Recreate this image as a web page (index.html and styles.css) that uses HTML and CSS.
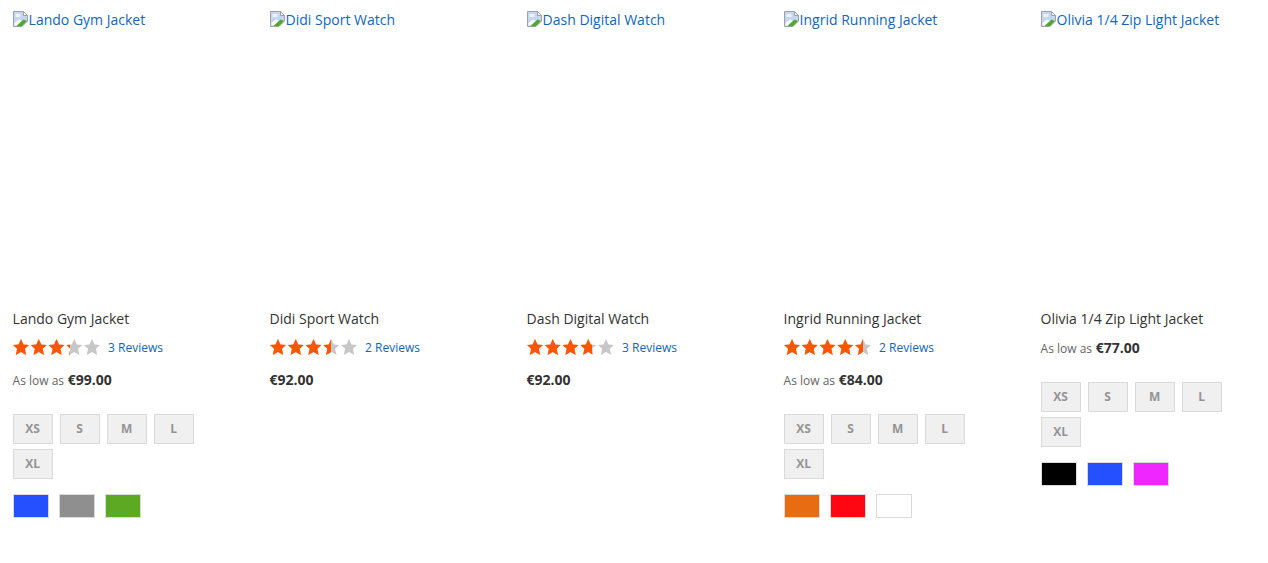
FILE: index.html
```html
<!DOCTYPE html>
<html>
<head>
    <link rel="stylesheet" href="styles.css">
</head>
<body>
    <svg class="sprite" width="0" height="0">
        <symbol id="broken" viewBox="0 0 16 16">
            <path d="M.5.5H10.500L14.500 4.500V10L9 15.500H.5Z" fill="#c3d6f2" stroke="#a0a0a0"/>
            <path d="M10.500 .5V4.500H14.500Z" fill="#fff" stroke="#a0a0a0"/>
            <path d="M2.500 3h5v3h-5z" fill="#eef3fb"/>
            <path d="M1.500 14.500V12L6 8.500L9 10L4 14.500Z" fill="#fff"/>
            <path d="M3.500 15L10.500 8.500L14 10L9 15Z" fill="#4fa832"/>
        </symbol>
        <symbol id="star" viewBox="0 0 16 16">
            <path d="M8 0L10.500 5.500L16 6L11.900 9.800L13.200 16L8 13L2.800 16L4.100 9.800L0 6L5.500 5.500Z"/>
        </symbol>
        <symbol id="five-stars" viewBox="0 0 90 16">
            <use href="#star" x="0" width="16" height="16"/>
            <use href="#star" x="17.750" width="16" height="16"/>
            <use href="#star" x="35.500" width="16" height="16"/>
            <use href="#star" x="53.250" width="16" height="16"/>
            <use href="#star" x="71" width="16" height="16"/>
        </symbol>
    </svg>

    <div class="products">
        <div class="card">
            <a class="photo" href="#"><svg class="broken"><use href="#broken"/></svg>Lando Gym Jacket</a>
            <div class="name">Lando Gym Jacket</div>
            <div class="rating">
                <div class="stars">
                    <svg class="stars-row"><use href="#five-stars"/></svg>
                    <span class="stars-on" style="width: 64%"><svg class="stars-row"><use href="#five-stars"/></svg></span>
                </div>
                <a href="#">3 Reviews</a>
            </div>
            <div class="price"><span class="label">As low as</span> €99.00</div>
            <div class="sizes">
                <div class="size">XS</div>
                <div class="size">S</div>
                <div class="size">M</div>
                <div class="size">L</div>
                <div class="size">XL</div>
            </div>
            <div class="colors">
                <div class="color blue"></div>
                <div class="color gray"></div>
                <div class="color green"></div>
            </div>
        </div>

        <div class="card">
            <a class="photo" href="#"><svg class="broken"><use href="#broken"/></svg>Didi Sport Watch</a>
            <div class="name">Didi Sport Watch</div>
            <div class="rating">
                <div class="stars">
                    <svg class="stars-row"><use href="#five-stars"/></svg>
                    <span class="stars-on" style="width: 68%"><svg class="stars-row"><use href="#five-stars"/></svg></span>
                </div>
                <a href="#">2 Reviews</a>
            </div>
            <div class="price">€92.00</div>
        </div>

        <div class="card">
            <a class="photo" href="#"><svg class="broken"><use href="#broken"/></svg>Dash Digital Watch</a>
            <div class="name">Dash Digital Watch</div>
            <div class="rating">
                <div class="stars">
                    <svg class="stars-row"><use href="#five-stars"/></svg>
                    <span class="stars-on" style="width: 73%"><svg class="stars-row"><use href="#five-stars"/></svg></span>
                </div>
                <a href="#">3 Reviews</a>
            </div>
            <div class="price">€92.00</div>
        </div>

        <div class="card">
            <a class="photo" href="#"><svg class="broken"><use href="#broken"/></svg>Ingrid Running Jacket</a>
            <div class="name">Ingrid Running Jacket</div>
            <div class="rating">
                <div class="stars">
                    <svg class="stars-row"><use href="#five-stars"/></svg>
                    <span class="stars-on" style="width: 88%"><svg class="stars-row"><use href="#five-stars"/></svg></span>
                </div>
                <a href="#">2 Reviews</a>
            </div>
            <div class="price"><span class="label">As low as</span> €84.00</div>
            <div class="sizes">
                <div class="size">XS</div>
                <div class="size">S</div>
                <div class="size">M</div>
                <div class="size">L</div>
                <div class="size">XL</div>
            </div>
            <div class="colors">
                <div class="color orange"></div>
                <div class="color red"></div>
                <div class="color white"></div>
            </div>
        </div>

        <div class="card">
            <a class="photo" href="#"><svg class="broken"><use href="#broken"/></svg>Olivia 1/4 Zip Light Jacket</a>
            <div class="name">Olivia 1/4 Zip Light Jacket</div>
            <div class="price"><span class="label">As low as</span> €77.00</div>
            <div class="sizes">
                <div class="size">XS</div>
                <div class="size">S</div>
                <div class="size">M</div>
                <div class="size">L</div>
                <div class="size">XL</div>
            </div>
            <div class="colors">
                <div class="color black"></div>
                <div class="color blue"></div>
                <div class="color pink"></div>
            </div>
        </div>
    </div>
</body>
</html>
```

FILE: styles.css
```css
body {
    margin: 0;
    font-family: "Open Sans", sans-serif;
    font-size: 14px;
    color: #333;
    background-color: #fff;
}

a {
    color: #0f66bd;
    text-decoration: none;
}

.sprite {
    display: block;
}

.products {
    display: grid;
    grid-template-columns: repeat(5, 257px);
    padding: 10px 0 0 12.6px;
}

.photo {
    display: block;
    height: 300px;
    line-height: 20px;
}

.broken {
    width: 16px;
    height: 16px;
    vertical-align: -2px;
}

.name {
    height: 18px;
    line-height: 18px;
    margin-bottom: 10px;
}

.rating {
    display: flex;
    align-items: center;
    height: 18px;
    margin-bottom: 14px;
    font-size: 12px;
}

.stars {
    position: relative;
    width: 90px;
    height: 16px;
    margin: -1px 5.5px 0 0;
    fill: #c7c7c7;
}

.stars-row {
    display: block;
    width: 90px;
    height: 16px;
}

.stars-on {
    position: absolute;
    left: 0;
    top: 0;
    overflow: hidden;
    fill: #ff5501;
}

.price {
    line-height: 20px;
    font-weight: 700;
}

.label {
    font-size: 12px;
    font-weight: 400;
    color: #666;
}

.sizes {
    display: flex;
    flex-wrap: wrap;
    gap: 5px 7px;
    width: 200px;
    margin-top: 23px;
}

.size {
    box-sizing: border-box;
    width: 40px;
    height: 30px;
    line-height: 28px;
    text-align: center;
    font-size: 12px;
    font-weight: 700;
    color: #949494;
    background-color: #f0f0f0;
    border: 1px solid #dadada;
}

.colors {
    display: flex;
    gap: 10px;
    margin-top: 15px;
}

.color {
    box-sizing: border-box;
    width: 36px;
    height: 24px;
    border: 1px solid #dadada;
}

.blue { background-color: #2450ff; }
.gray { background-color: #8f8f8f; }
.green { background-color: #5ea924; }
.orange { background-color: #e86c12; }
.red { background-color: #ff0712; }
.white { background-color: #fff; }
.black { background-color: #000; }
.pink { background-color: #ef26ff; }
```
